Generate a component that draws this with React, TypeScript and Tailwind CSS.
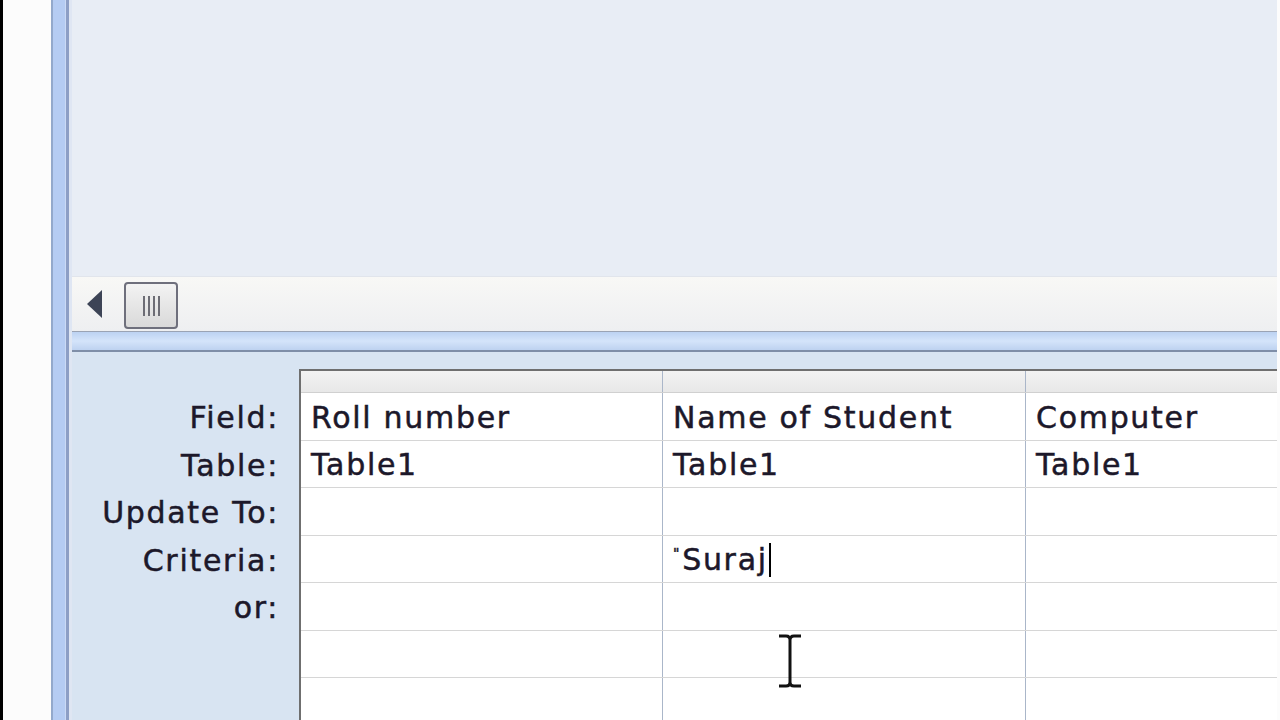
const rows = [
  { label: "Field:", cells: ["Roll number", "Name of Student", "Computer"] },
  { label: "Table:", cells: ["Table1", "Table1", "Table1"] },
  { label: "Update To:", cells: ["", "", ""] },
  { label: "Criteria:", cells: ["", "criteria", ""] },
  { label: "or:", cells: ["", "", ""] },
  { label: "", cells: ["", "", ""] },
  { label: "", cells: ["", "", ""] },
];

const colWidths = ["w-[362px]", "w-[363px]", "flex-1"];

function Cell({ value, idx }: { value: string; idx: number }) {
  const border = idx < 2 ? "border-r border-[#aab6c9]" : "";
  return (
    <div className={`${colWidths[idx]} ${border} h-full flex items-center pl-[10px] pt-[2px] whitespace-nowrap`}>
      {value === "criteria" ? (
        <span className="flex items-center">
          <span className="text-[14px] self-start mt-[6px] mr-[1px]">"</span>
          <span>Suraj</span>
          <span className="inline-block w-[2px] h-[34px] bg-black ml-[1px]" />
        </span>
      ) : (
        value
      )}
    </div>
  );
}

export default function App() {
  return (
    <div
      className="w-[1280px] h-[720px] flex overflow-hidden relative text-[#1c182a] [-webkit-text-stroke:0.5px_#1c182a]"
      style={{ fontFamily: '"DejaVu Sans", Verdana, sans-serif' }}
    >
      <div className="w-[3px] bg-black" />
      <div className="w-[48px] bg-[#fcfcfc]" />
      {/* window frame */}
      <div className="flex">
        <div className="w-[2px] bg-[#93a9cc]" />
        <div className="w-[12px] bg-[#b5ccf3]" />
        <div className="w-[1px] bg-[#cbdaf5]" />
        <div className="w-[3px] bg-[#8d9fc6]" />
        <div className="w-[3px] bg-[#dfe6f3]" />
      </div>

      <div className="flex-1 flex flex-col">
        <div className="h-[276px] shrink-0 bg-[#e8edf5]" />
        <div className="h-[55px] shrink-0 flex items-center border-t border-[#e1e5ec] bg-gradient-to-b from-[#f8f8f6] to-[#eeeff1]">
          <svg width="16" height="28" viewBox="0 0 16 28" className="ml-[15px]">
            <path d="M15 0 L0 14 L15 28 Z" fill="#3d4456" />
          </svg>
          <div className="ml-[21px] mt-[3px] w-[54px] h-[47px] rounded-[4px] border-2 border-[#6e6f7c] bg-gradient-to-b from-[#f3f3f3] to-[#d9d9d9] flex items-center justify-center gap-[3px]">
            {[0, 1, 2, 3].map((i) => (
              <div key={i} className="w-[2px] h-[20px] bg-[#6c6c74]" />
            ))}
          </div>
        </div>
        <div className="h-[1px] shrink-0 bg-[#9aa3b4]" />
        <div className="h-[18px] shrink-0 bg-gradient-to-b from-[#bcd2f2] via-[#d4e4fa] to-[#bed2f0]" />
        <div className="h-[2px] shrink-0 bg-[#7f8ea8]" />

        <div className="flex-1 min-h-0 overflow-hidden flex bg-[#d8e4f2]">
          <div className="w-[227px] pt-[41px] text-[30px] tracking-[1.7px]">
            {rows.map((r, i) => (
              <div key={i} className="h-[47.5px] flex items-center justify-end pr-[20px] pt-[2px]">
                {r.label}
              </div>
            ))}
          </div>
          <div className="flex-1 mt-[17px] border-l-2 border-t-2 border-[#6f6f6f] bg-white flex flex-col text-[30px] tracking-[1.7px]">
            <div className="h-[22px] shrink-0 flex border-b border-[#d0d0d0] bg-gradient-to-b from-[#f2f2f2] to-[#e8e8e8]">
              {[0, 1, 2].map((i) => (
                <div key={i} className={`${colWidths[i]} ${i < 2 ? "border-r border-[#aab6c9]" : ""}`} />
              ))}
            </div>
            {rows.map((r, i) => (
              <div key={i} className="h-[47.5px] shrink-0 flex border-b border-[#d6d6d6]">
                {r.cells.map((c, j) => (
                  <Cell key={j} value={c} idx={j} />
                ))}
              </div>
            ))}
          </div>
        </div>
      </div>
      <div className="w-[3px] bg-[#fcfcfc]" />

      {/* I-beam mouse cursor */}
      <svg className="absolute left-[776px] top-[633px]" width="28" height="56" viewBox="0 0 28 56">
        <path
          d="M3 3 H10 Q14 3 14 7 V49 Q14 53 10 53 H3 M25 3 H18 Q14 3 14 7 M14 49 Q14 53 18 53 H25"
          fill="none"
          stroke="#111"
          strokeWidth="3"
        />
      </svg>
    </div>
  );
}
